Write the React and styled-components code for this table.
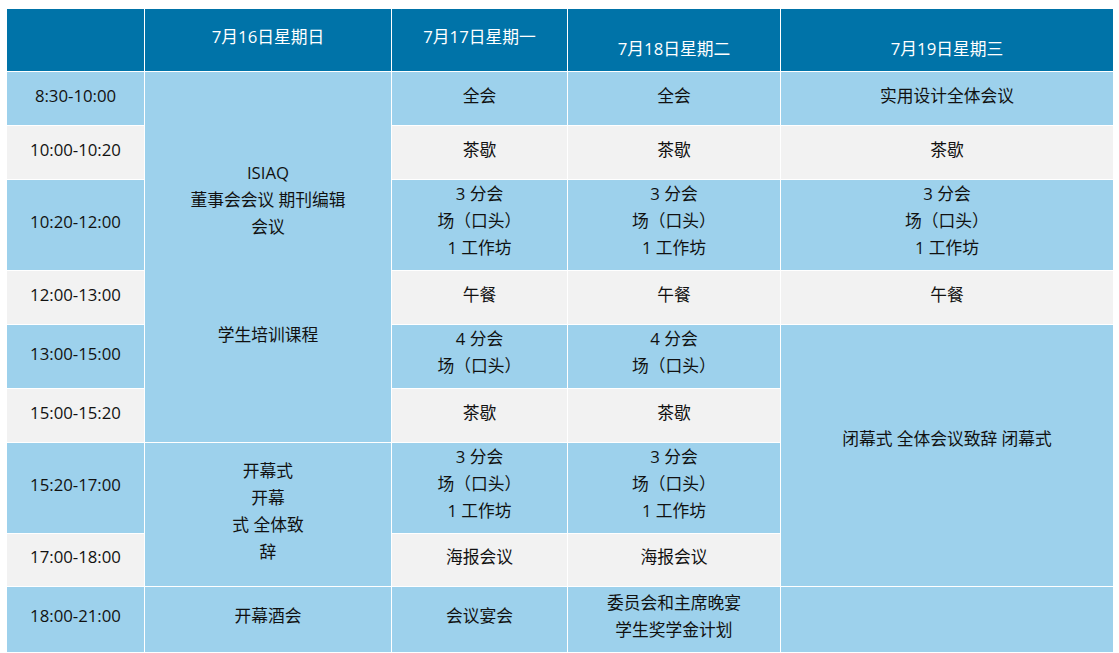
import React from 'react';
import styled, { createGlobalStyle } from 'styled-components';

const TONES = {
  head: { bg: '#0073a8', fg: '#ffffff' },
  blue: { bg: '#9dd1ec', fg: '#111111' },
  grey: { bg: '#f2f2f2', fg: '#111111' },
};

const GlobalStyle = createGlobalStyle`
  html, body {
    margin: 0;
    padding: 0;
    background: #ffffff;
  }
  body {
    font-family: "Segoe UI", "Open Sans", "Noto Sans CJK SC", sans-serif;
  }
`;

const Page = styled.div`
  padding: 8px 6px 0;
`;

const Schedule = styled.table`
  width: 1107px;
  table-layout: fixed;
  border-collapse: collapse;
  font-size: 16.75px;
  line-height: 27px;
`;

const Row = styled.tr`
  height: ${({ $h }) => $h}px;
`;

const Cell = styled.td`
  border: 1px solid #ffffff;
  padding: 0 4px ${({ $lift }) => $lift || 0}px;
  text-align: center;
  vertical-align: ${({ $valign }) => $valign || 'middle'};
  background: ${({ $tone }) => TONES[$tone].bg};
  color: ${({ $tone }) => TONES[$tone].fg};
  white-space: nowrap;
`;

const HeadCell = styled(Cell).attrs({ as: 'th' })`
  font-weight: 400;
  padding-top: ${({ $valign }) => ($valign === 'top' ? '14px' : '0')};
  padding-bottom: ${({ $valign }) => ($valign === 'bottom' ? '9px' : '0')};
`;

const Lines = ({ items }) =>
  items.map((line, i) => (
    <React.Fragment key={i}>
      {i > 0 && <br />}
      {line || '\u00a0'}
    </React.Fragment>
  ));

const SESSION = ['3 分会', '场（口头）', '1 工作坊'];
const SESSION4 = ['4 分会', '场（口头）'];

export default function App() {
  return (
    <Page>
      <GlobalStyle />
      <Schedule>
        <colgroup>
          <col style={{ width: 138 }} />
          <col style={{ width: 247 }} />
          <col style={{ width: 176 }} />
          <col style={{ width: 213 }} />
          <col style={{ width: 333 }} />
        </colgroup>
        <thead>
          <Row $h={63}>
            <HeadCell $tone="head" />
            <HeadCell $tone="head" $valign="top">7月16日星期日</HeadCell>
            <HeadCell $tone="head" $valign="top">7月17日星期一</HeadCell>
            <HeadCell $tone="head" $valign="bottom">7月18日星期二</HeadCell>
            <HeadCell $tone="head" $valign="bottom">7月19日星期三</HeadCell>
          </Row>
        </thead>
        <tbody>
          <Row $h={54}>
            <Cell $tone="blue" $lift={7}>8:30-10:00</Cell>
            <Cell $tone="blue" rowSpan={6} $lift={8}>
              <Lines items={['ISIAQ', '董事会会议 期刊编辑', '会议', '', '', '', '学生培训课程']} />
            </Cell>
            <Cell $tone="blue" $lift={7}>全会</Cell>
            <Cell $tone="blue" $lift={7}>全会</Cell>
            <Cell $tone="blue" $lift={7}>实用设计全体会议</Cell>
          </Row>
          <Row $h={54}>
            <Cell $tone="grey" $lift={7}>10:00-10:20</Cell>
            <Cell $tone="grey" $lift={7}>茶歇</Cell>
            <Cell $tone="grey" $lift={7}>茶歇</Cell>
            <Cell $tone="grey" $lift={7}>茶歇</Cell>
          </Row>
          <Row $h={89}>
            <Cell $tone="blue" $lift={8}>10:20-12:00</Cell>
            <Cell $tone="blue" $lift={9}><Lines items={SESSION} /></Cell>
            <Cell $tone="blue" $lift={9}><Lines items={SESSION} /></Cell>
            <Cell $tone="blue" $lift={9}><Lines items={SESSION} /></Cell>
          </Row>
          <Row $h={54}>
            <Cell $tone="grey" $lift={7}>12:00-13:00</Cell>
            <Cell $tone="grey" $lift={7}>午餐</Cell>
            <Cell $tone="grey" $lift={7}>午餐</Cell>
            <Cell $tone="grey" $lift={7}>午餐</Cell>
          </Row>
          <Row $h={63}>
            <Cell $tone="blue" $lift={7}>13:00-15:00</Cell>
            <Cell $tone="blue" $lift={9}><Lines items={SESSION4} /></Cell>
            <Cell $tone="blue" $lift={9}><Lines items={SESSION4} /></Cell>
            <Cell $tone="blue" rowSpan={4} $lift={34}>
              闭幕式 全体会议致辞 闭幕式
            </Cell>
          </Row>
          <Row $h={54}>
            <Cell $tone="grey" $lift={7}>15:00-15:20</Cell>
            <Cell $tone="grey" $lift={7}>茶歇</Cell>
            <Cell $tone="grey" $lift={7}>茶歇</Cell>
          </Row>
          <Row $h={90}>
            <Cell $tone="blue" $lift={7}>15:20-17:00</Cell>
            <Cell $tone="blue" rowSpan={2} $lift={8}>
              <Lines items={['开幕式', '开幕', '式 全体致', '辞']} />
            </Cell>
            <Cell $tone="blue" $lift={9}><Lines items={SESSION} /></Cell>
            <Cell $tone="blue" $lift={9}><Lines items={SESSION} /></Cell>
          </Row>
          <Row $h={53}>
            <Cell $tone="grey" $lift={7}>17:00-18:00</Cell>
            <Cell $tone="grey" $lift={7}>海报会议</Cell>
            <Cell $tone="grey" $lift={7}>海报会议</Cell>
          </Row>
          <Row $h={66}>
            <Cell $tone="blue" $lift={8}>18:00-21:00</Cell>
            <Cell $tone="blue" $lift={8}>开幕酒会</Cell>
            <Cell $tone="blue" $lift={8}>会议宴会</Cell>
            <Cell $tone="blue" $lift={8}>
              <Lines items={['委员会和主席晚宴', '学生奖学金计划']} />
            </Cell>
            <Cell $tone="blue" />
          </Row>
        </tbody>
      </Schedule>
    </Page>
  );
}
